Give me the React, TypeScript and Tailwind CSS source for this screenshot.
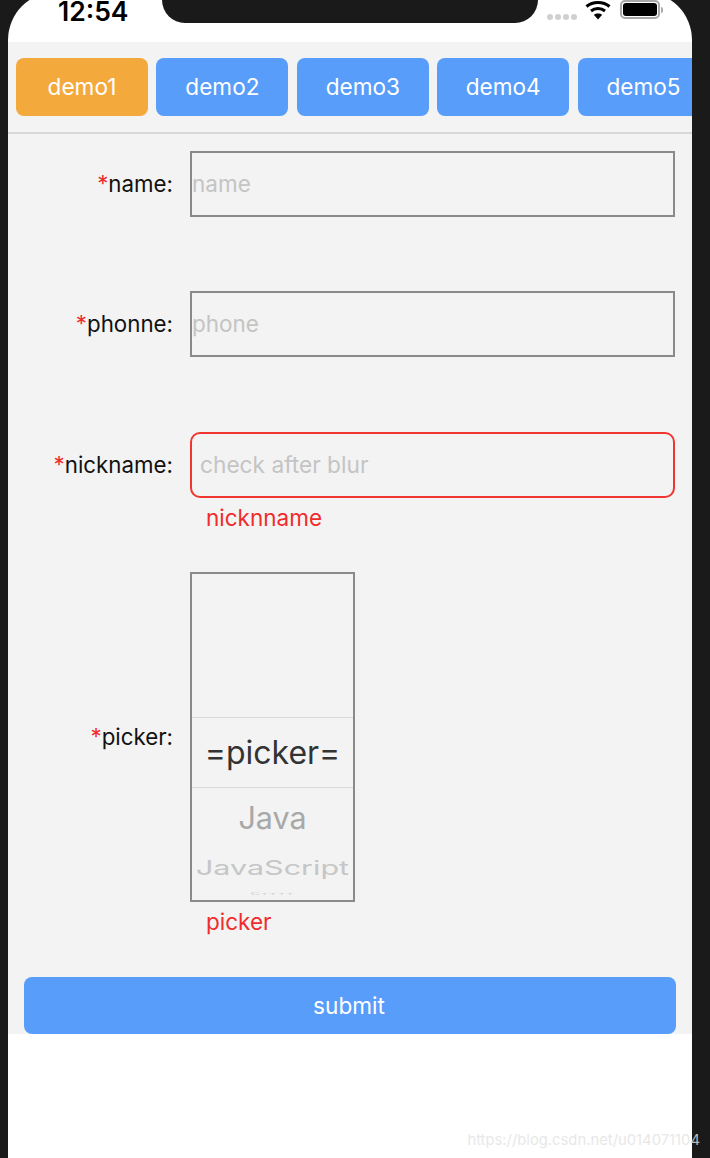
import React from 'react';

const FONT = "font-['Inter','Noto_Sans',sans-serif]";

const tabs = ['demo1', 'demo2', 'demo3', 'demo4', 'demo5'];

const Row = ({ label, children, className = '' }: { label: string; children: React.ReactNode; className?: string }) => (
  <div className={`flex items-center ${className}`}>
    <div className="w-[165px] shrink-0 text-right text-[22.3px] leading-none text-[#111]">
      <span className="text-[#f02b2b]">*</span>
      {label}:
    </div>
    <div className="ml-[17px]">{children}</div>
  </div>
);

const StatusIcons = () => (
  <div className="flex items-start">
    {/* signal dots */}
    <div className="mt-[14px] flex gap-[2px]">
      <span className="h-[6px] w-[6px] rounded-full bg-[#d0d0d0]" />
      <span className="h-[6px] w-[6px] rounded-full bg-[#d0d0d0]" />
      <span className="h-[6px] w-[6px] rounded-full bg-[#d0d0d0]" />
      <span className="h-[6px] w-[6px] rounded-full bg-[#d0d0d0]" />
    </div>
    {/* wifi */}
    <svg className="ml-[8px]" width="26" height="20" viewBox="0 0 26 20" fill="none">
      <path d="M1.5 6.5C7.8 1 18.2 1 24.5 6.5" stroke="#000" strokeWidth="3" />
      <path d="M6 11C10 7.6 16 7.6 20 11" stroke="#000" strokeWidth="3" />
      <path d="M13 19.5L8.8 14.8C11.2 12.9 14.8 12.9 17.2 14.8Z" fill="#000" />
    </svg>
    {/* battery */}
    <div className="ml-[9px] flex items-center">
      <div className="h-[19px] w-[40px] rounded-[5px] border-2 border-[#a8a8a8] p-[1px]">
        <div className="h-full w-full rounded-[3px] bg-black" />
      </div>
      <div className="ml-[1px] h-[6px] w-[2px] rounded-r-sm bg-[#a8a8a8]" />
    </div>
  </div>
);

export default function App() {
  return (
    <div className={`relative h-[1158px] w-[710px] overflow-hidden bg-[#1a1a1a] px-2 ${FONT}`}>
      <div className="-mt-2 flex h-[1166px] w-[684px] flex-col overflow-hidden rounded-t-[48px] bg-white">
        {/* status bar */}
        <div className="flex h-[50px] shrink-0 items-start justify-between pl-[50px] pr-[29px] pt-2">
          <div className="text-[26.5px] font-semibold leading-[22px] text-black">12:54</div>
          <StatusIcons />
        </div>

        <div className="h-[992px] shrink-0 bg-[#f3f3f3]">
          {/* tabs */}
          <div className="flex h-[92px] gap-[8.4px] overflow-hidden border-b-2 border-[#d8d8d8] pl-2 pt-4">
            {tabs.map((t, i) => (
              <div
                key={t}
                className={`flex h-[58px] w-[132px] shrink-0 items-center justify-center rounded-[8px] text-[22.6px] text-white ${
                  i === 0 ? 'bg-[#f4a93d]' : 'bg-[#589df9]'
                }`}
              >
                {t}
              </div>
            ))}
          </div>

          <div className="pt-[17px]">
            <Row label="name">
              <div className="flex h-[66px] w-[485px] items-center border-2 border-[#8a8a8a] text-[22.5px] text-[#c4c4c4]">
                name
              </div>
            </Row>
            <Row label="phonne" className="mt-[74px]">
              <div className="flex h-[66px] w-[485px] items-center border-2 border-[#8a8a8a] text-[22.5px] text-[#c4c4c4]">
                phone
              </div>
            </Row>
            <Row label="nickname" className="mt-[75px]">
              <div className="flex h-[66px] w-[485px] items-center rounded-[10px] border-2 border-[#f0362e] pl-2 text-[22.7px] text-[#c4c4c4]">
                check after blur
              </div>
            </Row>
            <div className="ml-[198px] mt-[5px] text-[22.5px] leading-[30px] text-[#f02b2b]">nicknname</div>

            <Row label="picker" className="mt-[39px]">
              <div className="flex h-[330px] w-[165px] flex-col items-center overflow-hidden border-2 border-[#8a8a8a]">
                <div className="mt-[143px] flex h-[71px] w-full shrink-0 items-center justify-center border-y border-[#d9d9d9] text-[32px] text-[#333]">
                  =picker=
                </div>
                <div className="mt-[12px] text-[30.5px] leading-[36px] text-[#a8a8a8]">Java</div>
                <div className="mt-[15px] scale-y-[0.66] whitespace-nowrap text-[30.5px] leading-[34px] text-[#c6c6c6]">
                  JavaScript
                </div>
                <div className="mt-[1px] scale-y-[0.3] whitespace-nowrap text-[13px] leading-[14px] text-[#cccccc]">
                  C++++
                </div>
              </div>
            </Row>
            <div className="ml-[198px] mt-[5px] text-[22.5px] leading-[30px] text-[#f02b2b]">picker</div>

            <div className="ml-4 mt-[40px] flex h-[57px] w-[652px] items-center justify-center rounded-[8px] bg-[#589df9] pr-[2px] text-[22.6px] text-white">
              submit
            </div>
          </div>
        </div>
      </div>

      {/* notch */}
      <div className="absolute left-[162px] top-0 h-[23px] w-[376px] rounded-b-[34px] bg-[#1a1a1a]" />

      {/* watermark */}
      <div className="absolute right-[10px] top-[1130px] whitespace-nowrap text-[14.8px] leading-5 text-[#e8e8e8]">
        https://blog.csdn.net/u01407110<span className="text-[#bbbbbb]">4</span>
      </div>
    </div>
  );
}
